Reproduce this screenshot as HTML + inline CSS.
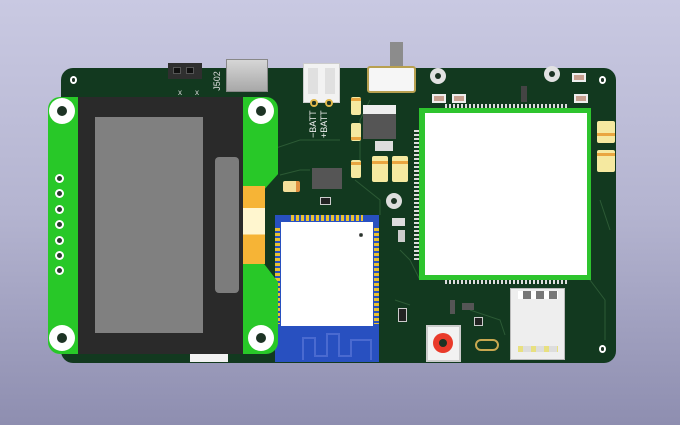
<!DOCTYPE html>
<html><head><style>
*{margin:0;padding:0;box-sizing:border-box}
body{width:680px;height:425px;overflow:hidden;background:linear-gradient(#c9c9e2 0%,#b4b4d0 50%,#8e8eb0 100%);position:relative;font-family:"Liberation Sans",sans-serif}
div{position:absolute}
.hole{border-radius:50%;background:#fff}
.hole::after{content:"";position:absolute;left:30%;top:30%;width:40%;height:40%;border-radius:50%;background:#1d3324}
.pin{width:9px;height:9px;border-radius:50%;background:#fff}
.pin::after{content:"";position:absolute;left:2px;top:2px;width:5px;height:5px;border-radius:50%;background:#2a3a2e}
.cap{background:#f5e9a0;border-radius:2px}
.cap i{position:absolute;left:0;right:0;height:3px;background:#e9a640}
.chip{background:#555}
.pad{background:#eee}
.t{color:#d8d8d8;font-size:5px;white-space:nowrap}
.s{background:#ddd}
</style></head><body>
<!-- board -->
<div style="left:61px;top:68px;width:555px;height:295px;background:#12391f;border-radius:12px"></div>
<div class="hole" style="left:70px;top:76px;width:7px;height:8px;background:#fff"></div>
<div class="hole" style="left:599px;top:76px;width:7px;height:8px"></div>
<div class="hole" style="left:599px;top:345px;width:7px;height:8px"></div>
<!-- traces -->
<svg style="position:absolute;left:0;top:0" width="680" height="425"><g stroke="#2c5a35" stroke-width="1" fill="none">
<path d="M270 150 L300 140 L340 140"/><path d="M280 175 L300 170 L310 170"/><path d="M355 180 L380 200 L380 215"/>
<path d="M400 250 L410 260 L420 280"/><path d="M590 280 L605 300 L605 340"/><path d="M470 310 L500 320 L505 335"/>
<path d="M370 100 L360 120 L360 160"/><path d="M600 200 L610 230"/><path d="M395 300 L410 305"/></g></svg>
<!-- top connectors -->
<div style="left:168px;top:63px;width:34px;height:16px;background:#2f2f2f"></div>
<div style="left:173px;top:67px;width:8px;height:7px;background:#111;border:1px solid #555"></div>
<div style="left:186px;top:67px;width:8px;height:7px;background:#111;border:1px solid #555"></div>
<div class="t" style="left:178px;top:88px;font-size:8px">x</div>
<div class="t" style="left:195px;top:88px;font-size:8px">x</div>
<div class="t" style="left:207px;top:76px;font-size:9px;transform:rotate(-90deg);color:#ddd">J502</div>
<div style="left:226px;top:59px;width:42px;height:33px;background:linear-gradient(#d6d6d6,#a8a8a8);border:1px solid #888"></div>
<div style="left:303px;top:63px;width:37px;height:40px;background:#f2f2f2;border:1px solid #ccc"></div>
<div style="left:308px;top:68px;width:10px;height:26px;background:#e0e0e0"></div>
<div style="left:325px;top:68px;width:10px;height:26px;background:#e0e0e0"></div>
<div class="hole" style="left:310px;top:99px;width:8px;height:8px;background:#e0b84a"></div>
<div class="hole" style="left:325px;top:99px;width:8px;height:8px;background:#e0b84a"></div>
<div class="t" style="left:308px;top:112px;font-size:9px;transform:rotate(-90deg);transform-origin:0 0;top:138px;color:#eee">−BATT</div>
<div class="t" style="left:319px;top:138px;font-size:9px;transform:rotate(-90deg);transform-origin:0 0;color:#eee">+BATT</div>
<div style="left:390px;top:42px;width:13px;height:26px;background:#8c8c8c"></div>
<div style="left:367px;top:66px;width:49px;height:27px;background:#f6f6f6;border:2px solid #b8a050;border-radius:3px"></div>
<!-- power area -->
<div class="cap" style="left:351px;top:97px;width:10px;height:18px"><i style="top:1px"></i></div>
<div class="cap" style="left:351px;top:123px;width:10px;height:18px"><i style="bottom:1px"></i></div>
<div class="cap" style="left:351px;top:160px;width:10px;height:18px"><i style="top:2px"></i></div>
<div style="left:363px;top:105px;width:33px;height:34px;background:#555;border-top:9px solid #eee"></div>
<div style="left:375px;top:141px;width:18px;height:10px;background:#ddd"></div>
<div class="cap" style="left:372px;top:156px;width:16px;height:26px"><i style="top:5px"></i></div>
<div class="cap" style="left:392px;top:156px;width:16px;height:26px"><i style="top:5px"></i></div>
<div style="left:312px;top:165px;width:30px;height:24px;background:#555;border-top:3px solid #12391f"></div>
<div style="left:283px;top:181px;width:17px;height:11px;background:#f4df9a;border-right:4px solid #e09040;border-radius:2px"></div>
<div style="left:320px;top:197px;width:11px;height:8px;background:#222;border:1px solid #ccc"></div>
<div class="hole" style="left:386px;top:193px;width:16px;height:16px;background:#ddd"></div>
<div style="left:392px;top:218px;width:13px;height:8px;background:#ddd"></div>
<div style="left:398px;top:230px;width:7px;height:12px;background:#ccc"></div>
<!-- top right parts -->
<div class="hole" style="left:430px;top:68px;width:16px;height:16px;background:#e2e2e2"></div>
<div class="hole" style="left:544px;top:66px;width:16px;height:16px;background:#e2e2e2"></div>
<div style="left:432px;top:94px;width:14px;height:9px;background:#c8a090;border:2px solid #eee"></div>
<div style="left:452px;top:94px;width:14px;height:9px;background:#c8a090;border:2px solid #eee"></div>
<div style="left:572px;top:73px;width:14px;height:9px;background:#c8a090;border:2px solid #eee"></div>
<div style="left:574px;top:94px;width:14px;height:9px;background:#c8a090;border:2px solid #eee"></div>
<div style="left:521px;top:86px;width:6px;height:16px;background:#444"></div>
<div class="cap" style="left:597px;top:121px;width:18px;height:22px"><i style="top:12px"></i></div>
<div class="cap" style="left:597px;top:150px;width:18px;height:22px"><i style="top:3px"></i></div>
<!-- big module -->
<div style="left:419px;top:108px;width:172px;height:172px;background:#2ec42e"></div>
<div style="left:425px;top:113px;width:162px;height:162px;background:#fff"></div>
<div style="left:445px;top:104px;width:122px;height:4px;background:repeating-linear-gradient(90deg,#ddd 0 2px,transparent 2px 4px)"></div>
<div style="left:445px;top:280px;width:122px;height:4px;background:repeating-linear-gradient(90deg,#ddd 0 2px,transparent 2px 4px)"></div>
<div style="left:414px;top:130px;width:5px;height:130px;background:repeating-linear-gradient(#ddd 0 2px,transparent 2px 4px)"></div>
<!-- esp module -->
<div style="left:275px;top:215px;width:104px;height:147px;background:#2850c0"></div>
<div style="left:281px;top:222px;width:92px;height:104px;background:#fff"></div>
<div style="left:291px;top:215px;width:72px;height:6px;background:repeating-linear-gradient(90deg,#e8c030 0 3px,#2850c0 3px 5px)"></div>
<div style="left:275px;top:228px;width:5px;height:96px;background:repeating-linear-gradient(#e8c030 0 3px,#2850c0 3px 5px)"></div>
<div style="left:374px;top:228px;width:5px;height:96px;background:repeating-linear-gradient(#e8c030 0 3px,#2850c0 3px 5px)"></div>
<div class="hole" style="left:359px;top:233px;width:4px;height:4px;background:#555"></div>
<svg style="position:absolute;left:275px;top:326px" width="104" height="36"><path d="M28 34 V12 H40 V30 H52 V8 H64 V30 H76 V14 H96 V34" stroke="#4a6ad0" stroke-width="2" fill="none"/></svg>
<!-- display board -->
<div style="left:48px;top:97px;width:230px;height:257px;background:#28c828;border-radius:12px;clip-path:polygon(0 0,100% 0,100% 30%,94% 36%,94% 65%,100% 72%,100% 100%,0 100%)"></div>
<div style="left:78px;top:97px;width:165px;height:257px;background:#2a2a2a"></div>
<div style="left:95px;top:117px;width:108px;height:216px;background:#808080"></div>
<div style="left:215px;top:157px;width:24px;height:136px;background:#7c7c7c;border-radius:4px"></div>
<div style="left:243px;top:186px;width:22px;height:78px;background:linear-gradient(#f6b436 0 28%,#fff6cf 28% 62%,#f6b436 62%)"></div>
<div class="hole" style="left:49px;top:98px;width:26px;height:26px"></div>
<div class="hole" style="left:248px;top:98px;width:26px;height:26px"></div>
<div class="hole" style="left:49px;top:325px;width:26px;height:26px"></div>
<div class="hole" style="left:248px;top:325px;width:26px;height:26px"></div>
<div class="pin" style="left:55px;top:174px"></div><div class="pin" style="left:55px;top:189px"></div>
<div class="pin" style="left:55px;top:205px"></div><div class="pin" style="left:55px;top:220px"></div>
<div class="pin" style="left:55px;top:236px"></div><div class="pin" style="left:55px;top:251px"></div>
<div class="pin" style="left:55px;top:266px"></div>
<div style="left:190px;top:354px;width:38px;height:8px;background:#f2f2f2"></div>
<!-- bottom right -->
<div style="left:426px;top:325px;width:35px;height:37px;background:#f2f2f2;border:2px solid #ccc"></div>
<div class="hole" style="left:433px;top:333px;width:20px;height:20px;background:#e93a2a"></div>
<div style="left:475px;top:339px;width:24px;height:12px;background:#12391f;border:2px solid #c9a850;border-radius:6px"></div>
<div style="left:474px;top:317px;width:9px;height:9px;background:#222;border:1px solid #ccc"></div>
<div style="left:510px;top:288px;width:55px;height:72px;background:#eeeeee;border:1px solid #bbb"></div>
<div style="left:518px;top:291px;width:40px;height:8px;background:repeating-linear-gradient(90deg,#fff 0 5px,#777 5px 13px)"></div>
<div style="left:518px;top:346px;width:40px;height:6px;background:repeating-linear-gradient(90deg,#e8e080 0 5px,#ddd 5px 13px)"></div>
<div style="left:450px;top:300px;width:5px;height:14px;background:#555"></div>
<div style="left:398px;top:308px;width:9px;height:14px;background:#222;border:1px solid #ccc"></div>
<div style="left:462px;top:303px;width:12px;height:7px;background:#555"></div>
</body></html>
